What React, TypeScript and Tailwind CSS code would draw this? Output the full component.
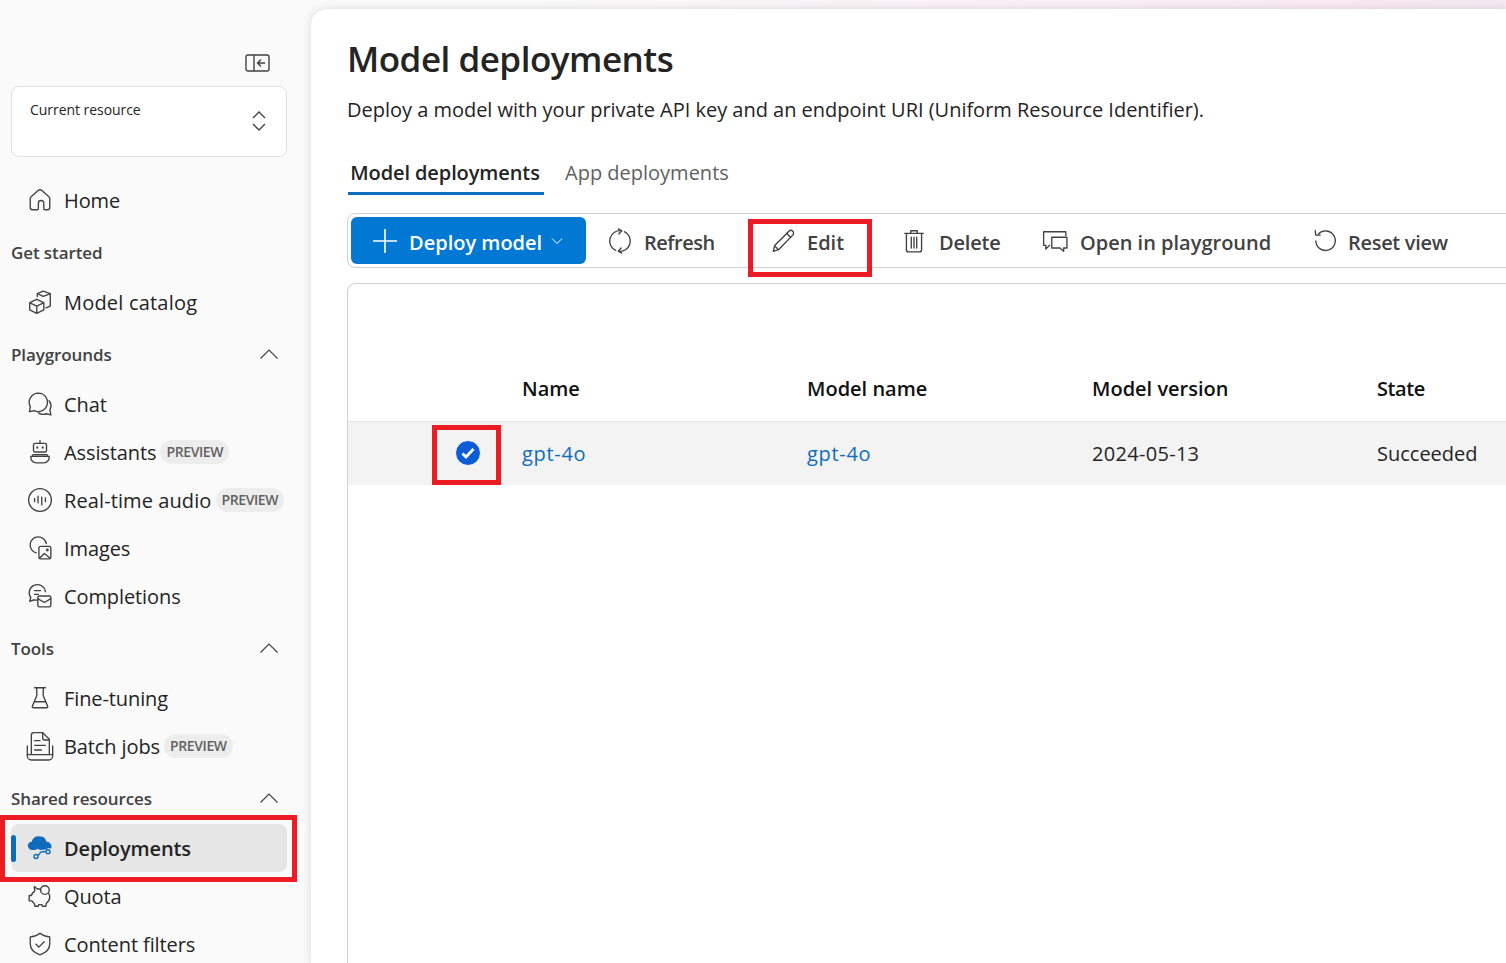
import React from "react";

const Icon = ({ size = 26, className = "", children }: { size?: number; className?: string; children: React.ReactNode }) => (
  <svg
    width={size}
    height={size}
    viewBox="0 0 24 24"
    fill="none"
    stroke="currentColor"
    strokeWidth={1.25}
    strokeLinecap="round"
    strokeLinejoin="round"
    className={"shrink-0 " + className}
  >
    {children}
  </svg>
);

const HomeIcon = () => (
  <Icon>
    <path d="M10 3.400a3 3 0 0 1 4 0l6.200 5.600c.5.4.8 1 .8 1.600V19a2 2 0 0 1-2 2h-2.500a1 1 0 0 1-1-1v-5a2.500 2.500 0 0 0-5 0v5a1 1 0 0 1-1 1H5a2 2 0 0 1-2-2v-8.400c0-.6.3-1.200.8-1.600z" />
  </Icon>
);
const CatalogIcon = () => (
  <Icon>
    <path d="M9 9.500l6.500 3v6.800L9 22.500l-6.500-3.200v-6.800z" />
    <path d="M2.800 12.800L9 15.800l6.200-3M9 15.800v6.400" />
    <path d="M9.500 7V4.300L15 2l6.500 2.200v11.600L17.500 17.500" />
    <path d="M10 4.600l5 2.200 6-2.400" />
  </Icon>
);
const ChatIcon = () => (
  <Icon>
    <path d="M10.500 2a8.500 8.500 0 1 1-3.700 16.200l-4.600.8.9-4.400A8.500 8.500 0 0 1 10.500 2z" />
    <path d="M20.400 9a7.500 7.500 0 0 1 .7 8.400l1 4.600-4.500-1a7.500 7.500 0 0 1-7.100-.8" />
  </Icon>
);
const AssistantIcon = () => (
  <Icon>
    <path d="M12 1.500v2.500" />
    <rect x="6" y="4" width="12" height="8" rx="1.500" />
    <path d="M9.500 7.500v.5M14.500 7.500v.5" strokeWidth={1.800} />
    <path d="M3.500 16h17v1a5 5 0 0 1-5 5h-7a5 5 0 0 1-5-5z" />
    <path d="M5 15.500c0-.6.4-1 1-1h12c.6 0 1 .4 1 1" />
  </Icon>
);
const AudioIcon = () => (
  <Icon>
    <circle cx="12" cy="12" r="10.500" />
    <path d="M7 10.500v3M10.200 8.500v6M13.600 9.500v7M17 10v3.500" />
  </Icon>
);
const ImagesIcon = () => (
  <Icon>
    <path d="M8.500 16.500A7.500 7.500 0 1 1 17.800 8" />
    <rect x="11" y="10.500" width="11" height="11.500" rx="1.500" />
    <path d="M11.500 21.500l4.500-4.500 5.500 4.500" />
    <circle cx="18.800" cy="13.800" r=".7" />
  </Icon>
);
const CompletionsIcon = () => (
  <Icon>
    <path d="M9.500 15.800l-3.400-.1-3.600 1.300 1-3.600A7.500 7.500 0 1 1 17 8" />
    <path d="M7 7h5.500M7 10.500h3.500" />
    <rect x="10" y="12" width="12" height="10" rx="1.500" />
    <path d="M10 14.500l6 3.500 6-3.500" />
  </Icon>
);
const FlaskIcon = () => (
  <Icon>
    <path d="M7 2.500h10M9 2.500v7.500L5 19.500c-.4.8.2 1.500 1 1.500h12c.8 0 1.400-.7 1-1.500L15 10V2.500M7 15.500h10" />
  </Icon>
);
const BatchIcon = () => (
  <Icon size={32}>
    <path d="M5.500 18V4a2 2 0 0 1 2-2H14l5 5v11" strokeWidth={1} />
    <path d="M14 2v4a1.500 1.500 0 0 0 1.500 1.500h3.500M8 8h4M8 11.500h8M8 15h5" strokeWidth={1} />
    <path d="M2.500 12v7.500a3 3 0 0 0 3 3h13a3 3 0 0 0 3-3V12" strokeWidth={1} />
    <path d="M2.500 18.500h19" strokeWidth={1} />
  </Icon>
);
const DeployIcon = () => (
  <svg width="26" height="26" viewBox="0 0 26 26" className="shrink-0">
    <path
      d="M13 1.500a6.500 6.500 0 0 1 6.400 5.200A4.900 4.900 0 0 1 24.500 11.800c0 .8-.2 1.400-.5 2a3 3 0 0 0-4.300.6l-6.700.6a3 3 0 0 0-2.600-1.100c-.8 0-1.300.4-1.600 1H5.800A4.600 4.600 0 0 1 .8 10.800c0-2.200 1.700-4 3.900-4.100A6.400 6.400 0 0 1 13 1.500z"
      fill="#0f6cbd"
    />
    <g fill="none" stroke="#0f6cbd" strokeWidth="1.400">
      <circle cx="9" cy="21.500" r="2" />
      <circle cx="21" cy="16.800" r="2" />
      <path d="M10.800 20.500c2-.6 1.400-3.600 4-3.800h4" />
    </g>
  </svg>
);
const QuotaIcon = () => (
  <Icon>
    <circle cx="16.500" cy="6.500" r="4" />
    <path d="M12.500 5.500H9.500L6.800 3.200l.3 4.300C5.600 8.600 4.600 10 4 11.500H2v5h2.500c.6 1 1.400 1.800 2.300 2.500l.5 2.500h3l.5-1.500h3l.5 1.500h3l.6-2.800c1.900-1.400 3.100-3.600 3.100-5.700 0-1.200-.3-2.200-.9-3.200" />
  </Icon>
);
const ShieldIcon = () => (
  <Icon>
    <path d="M12 2c2.600 2.100 5.400 3.200 9 3.400V12c0 4.600-3.200 8-9 10-5.800-2-9-5.400-9-10V5.400C6.600 5.200 9.400 4.100 12 2z" />
    <path d="M8.300 12.300l2.600 2.600 5-5" />
  </Icon>
);
const Chevron = () => (
  <svg width="20" height="12" viewBox="0 0 20 12" fill="none" stroke="#424242" strokeWidth="1.200" className="mb-[2px] shrink-0">
    <path d="M1.500 10.500L10 2l8.500 8.500" />
  </svg>
);

const CollapseIcon = () => (
  <svg width="26" height="20" viewBox="0 0 26 20" fill="none" stroke="#424242" strokeWidth="1.400">
    <rect x="1" y="2" width="23" height="16" rx="2" />
    <path d="M9 2v16M20 10h-7M16 6.500L12.500 10l3.500 3.500" />
  </svg>
);

const RefreshIcon = () => (
  <Icon className="text-[#424242]">
    <path d="M13.500 2.600A9.500 9.500 0 0 0 8 20.600" />
    <path d="M10.500 .8L13.500 2.600 11 5.500" />
    <path d="M10.500 21.400A9.500 9.500 0 0 0 16 3.400" />
    <path d="M13.500 23.200L10.500 21.400 13 18.500" />
  </Icon>
);
const PencilIcon = () => (
  <Icon className="text-[#424242]">
    <path d="M3 21.500l1.300-5.300L17.500 3a2.500 2.500 0 0 1 3.500 0 2.500 2.500 0 0 1 0 3.600L7.900 20z" />
    <path d="M15.500 5l3.500 3.600M4.300 16.500l3.300 3.300" />
  </Icon>
);
const TrashIcon = () => (
  <Icon className="text-[#424242]">
    <path d="M3.500 5h17M9 5V2.500h6V5M5 5v15a2 2 0 0 0 2 2h10a2 2 0 0 0 2-2V5M9.500 8.500v10M12 8.500v10M14.500 8.500v10" />
  </Icon>
);
const PlaygroundIcon = () => (
  <Icon className="text-[#424242]">
    <path d="M22 7V3.500H1.500V16h2v3.500L7 16" />
    <path d="M9 8.500h14v10h-3v3l-3.500-3H9z" />
  </Icon>
);
const ResetIcon = () => (
  <Icon className="text-[#424242]">
    <path d="M6 5.500A9 9 0 1 1 3.500 12" />
    <path d="M3 2.500l.4 4 4.100.1" />
  </Icon>
);

type NavItem = { label: string; icon: React.ReactNode; preview?: boolean; active?: boolean; tracking?: string };

const NavRow = ({ item }: { item: NavItem }) => (
  <div className="relative">
    <div className={"flex h-12 items-center gap-3 pl-[17px] text-[#242424] rounded-lg " + (item.active ? "bg-[#e6e6e6] font-semibold" : "")}>
      {item.active && <span className="absolute left-0 top-[11px] h-[27px] w-[5px] rounded-full bg-[#0f6cbd]" />}
      <span className={"flex w-6 shrink-0 items-center justify-center " + (item.active ? "text-[#0f6cbd]" : "text-[#424242]")}>{item.icon}</span>
      <span className={"pt-px text-[20px] whitespace-nowrap " + (item.tracking ?? "tracking-[-0.1px]")}>{item.label}</span>
      {item.preview && (
        <span className="-ml-2 mb-px flex h-6 items-center rounded-full bg-[#ededed] px-1.5 pb-px text-[14px] font-semibold tracking-[-0.4px] text-[#616161]">
          PREVIEW
        </span>
      )}
    </div>
    {item.active && <div className="absolute -left-[11px] -right-[10px] -top-[9px] -bottom-[10px] border-[5px] border-[#ed1c24]" />}
  </div>
);

const Heading = ({ label, open }: { label: string; open?: boolean }) => (
  <div className="flex h-[54px] items-center justify-between pt-1 pr-2">
    <span className="text-[17px] font-semibold tracking-[-0.1px] text-[#424242]">{label}</span>
    {open && <Chevron />}
  </div>
);

const playgrounds: NavItem[] = [
  { label: "Chat", icon: <ChatIcon /> },
  { label: "Assistants", icon: <AssistantIcon />, preview: true },
  { label: "Real-time audio", icon: <AudioIcon />, preview: true, tracking: "tracking-[0.1px]" },
  { label: "Images", icon: <ImagesIcon /> },
  { label: "Completions", icon: <CompletionsIcon /> },
];
const tools: NavItem[] = [
  { label: "Fine-tuning", icon: <FlaskIcon /> },
  { label: "Batch jobs", icon: <BatchIcon />, preview: true },
];
const shared: NavItem[] = [
  { label: "Deployments", icon: <DeployIcon />, active: true },
  { label: "Quota", icon: <QuotaIcon /> },
  { label: "Content filters", icon: <ShieldIcon /> },
];

const Sidebar = () => (
  <aside className="w-[311px] shrink-0 pl-[11px] pr-[24px] pt-[53px]">
    <div className="mb-[13px] flex justify-end pr-[16px]">
      <CollapseIcon />
    </div>
    <div className="mb-[19px] flex h-[71px] items-start justify-between rounded-lg border border-[#e0e0e0] bg-white pl-[18px] pr-[19px] pt-[12px]">
      <span className="text-[14px] tracking-[-0.05px] text-[#242424]">Current resource</span>
      <svg width="16" height="22" viewBox="0 0 16 22" fill="none" stroke="#424242" strokeWidth="1.400" className="mt-[11px]">
        <path d="M2 8l6-6 6 6M2 14l6 6 6-6" />
      </svg>
    </div>
    <NavRow item={{ label: "Home", icon: <HomeIcon /> }} />
    <Heading label="Get started" />
    <NavRow item={{ label: "Model catalog", icon: <CatalogIcon />, tracking: "tracking-[0.2px]" }} />
    <Heading label="Playgrounds" open />
    {playgrounds.map((i) => (
      <NavRow key={i.label} item={i} />
    ))}
    <Heading label="Tools" open />
    {tools.map((i) => (
      <NavRow key={i.label} item={i} />
    ))}
    <Heading label="Shared resources" open />
    {shared.map((i) => (
      <NavRow key={i.label} item={i} />
    ))}
  </aside>
);

const ToolButton = ({ icon, label, width }: { icon: React.ReactNode; label: string; width: string }) => (
  <div className={"flex shrink-0 items-center text-[20px] font-semibold text-[#424242] " + width}>
    {icon}
    <span className="pt-[4px] whitespace-nowrap">{label}</span>
  </div>
);

export default function App() {
  return (
    <div className="flex h-screen w-full overflow-hidden bg-[linear-gradient(105deg,#fafafa_0%,#fafafa_30%,#f9e9f1_78%,#e8ecf8_100%)] font-['Open_Sans','Noto_Sans',sans-serif]">
      <Sidebar />
      <main className="mt-[9px] min-w-0 flex-1 overflow-hidden rounded-tl-2xl bg-white pl-[36px] shadow-[0_0_8px_rgba(0,0,0,0.14)]">
        <h1 className="mt-[28px] h-[44px] text-[35px] font-semibold leading-[44px] tracking-[-0.5px] text-[#242424]">Model deployments</h1>
        <p className="mt-[15px] h-7 text-[20px] leading-7 tracking-[-0.02px] text-[#242424] whitespace-nowrap">
          Deploy a model with your private API key and an endpoint URI (Uniform Resource Identifier).
        </p>

        <div className="mt-[27px] ml-px flex h-11 items-stretch">
          <div className="flex w-[196px] items-center justify-center border-b-[3px] border-[#0f6cbd] pr-[2px] pt-[2px] text-[20px] font-semibold tracking-[-0.1px] text-[#242424] whitespace-nowrap">
            Model deployments
          </div>
          <div className="ml-[21px] flex items-center pb-px text-[20px] text-[#616161] whitespace-nowrap">App deployments</div>
        </div>

        <div className="mt-[18px] flex h-[55px] w-[1300px] items-center rounded-l-lg border border-[#d1d1d1] pl-[3px]">
          <div className="flex h-[47px] w-[235px] shrink-0 items-center rounded-md bg-[#0078d4] pl-[21px] text-white">
            <svg width="26" height="26" viewBox="0 0 26 26" stroke="white" strokeWidth="1.600" className="shrink-0">
              <path d="M13 1v24M1 13h24" />
            </svg>
            <span className="ml-[11px] pt-[4px] text-[20px] font-semibold whitespace-nowrap">Deploy model</span>
            <svg width="12" height="8" viewBox="0 0 12 8" fill="none" stroke="white" strokeWidth="1" className="ml-[9px] shrink-0">
              <path d="M1 1.500l5 5 5-5" />
            </svg>
          </div>
          <div className="relative ml-[21px] flex items-center">
            <ToolButton icon={<RefreshIcon />} label="Refresh" width="w-[163px] gap-[11px] tracking-[-0.5px]" />
            <ToolButton icon={<PencilIcon />} label="Edit" width="w-[131px] gap-[11px]" />
            <ToolButton icon={<TrashIcon />} label="Delete" width="w-[141px] gap-[12px] tracking-[-0.2px]" />
            <ToolButton icon={<PlaygroundIcon />} label="Open in playground" width="w-[270px] gap-[12px]" />
            <ToolButton icon={<ResetIcon />} label="Reset view" width="w-[140px] gap-[10px] tracking-[-0.3px]" />
            <div className="absolute left-[141px] top-[-5px] h-[58px] w-[124px] border-[5px] border-[#ed1c24]" />
          </div>
        </div>

        <div className="mt-[15px] h-[700px] w-[1300px] rounded-tl-lg border border-[#d1d1d1]">
          <div className="grid h-[137px] grid-cols-[174px_285px_285px_285px_1fr] items-end pb-[17px] text-[20px] font-semibold text-[#111111]">
            <span />
            <span>Name</span>
            <span>Model name</span>
            <span>Model version</span>
            <span className="tracking-[-0.4px]">State</span>
          </div>
          <div className="relative grid h-16 grid-cols-[174px_285px_285px_285px_1fr] items-center border-t border-[#e6e6e6] bg-[#f3f3f3] pt-px text-[20px] text-[#242424]">
            <span className="flex justify-end pr-[41px] pb-[2px]">
              <span className="flex h-[26px] w-[26px] items-center justify-center rounded-full border border-white bg-[#0b5cd5]">
                <svg width="16" height="14" viewBox="0 0 16 14" fill="none" stroke="white" strokeWidth="2.800">
                  <path d="M2.500 7.500l3.500 3.500 7.500-8" />
                </svg>
              </span>
            </span>
            <span className="tracking-[0.7px] text-[#0f6cbd]">gpt-4o</span>
            <span className="tracking-[0.7px] text-[#0f6cbd]">gpt-4o</span>
            <span className="tracking-[0.3px]">2024-05-13</span>
            <span>Succeeded</span>
            <div className="absolute left-[84px] top-[3px] h-[60px] w-[69px] border-[5px] border-[#ed1c24]" />
          </div>
        </div>
      </main>
    </div>
  );
}
